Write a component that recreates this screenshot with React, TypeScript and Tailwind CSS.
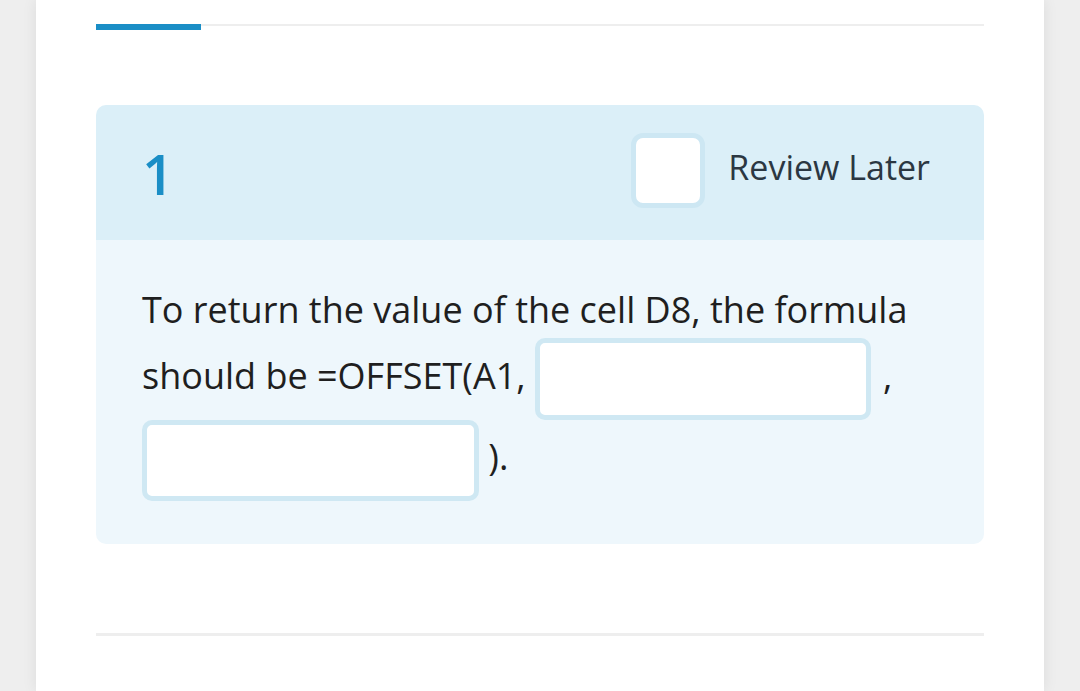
export default function App() {
  return (
    <div
      className="h-[691px] w-[1080px] overflow-hidden bg-[#eeeeee] text-[#222]"
      style={{ fontFamily: '"Open Sans", "Noto Sans", sans-serif' }}
    >
      <div className="mx-[36px] h-full bg-white px-[60px] pt-[24px] shadow-[0_0_14px_rgba(0,0,0,0.08)]">
        <div className="flex items-start">
          <div className="h-[6px] w-[105px] bg-[#1a8ec6]" />
          <div className="h-[2px] flex-1 bg-[#eeeeee]" />
        </div>

        <div className="mt-[75px] overflow-hidden rounded-[10px]">
          <div className="flex h-[135px] items-center justify-between bg-[#dbeff8] pl-[46px] pr-[54px]">
            <span className="text-[56px] font-semibold leading-none text-[#1a8ec6]">1</span>
            <label className="mb-[4px] flex items-center gap-[23px]">
              <span className="h-[75px] w-[74px] rounded-[12px] border-[5px] border-[#cde7f3] bg-white" />
              <span className="mb-[6px] text-[34px] text-[#2b3742]">Review Later</span>
            </label>
          </div>
          <div className="bg-[#eef7fc] px-[46px] pt-[42px] pb-[43px]">
            <p className="text-[36px] leading-[56px] text-[#1f1f1f]">
              <span>To return the value of the cell D8, the formula</span>{' '}
              <span>should be =OFFSET(A1,</span>{' '}
              <input
                type="text"
                className="inline-block h-[82px] w-[336px] rounded-[10px] border-[5px] border-[#cfe8f3] bg-white align-middle outline-none"
              />
              <span className="ml-[12px]">,</span>{' '}
              <input
                type="text"
                className="inline-block h-[81px] w-[337px] rounded-[10px] border-[5px] border-[#cfe8f3] bg-white align-middle outline-none"
              />{' '}
              <span>).</span>
            </p>
          </div>
        </div>

        <div className="mt-[89px] h-[3px] bg-[#eeeeee]" />
      </div>
    </div>
  );
}
